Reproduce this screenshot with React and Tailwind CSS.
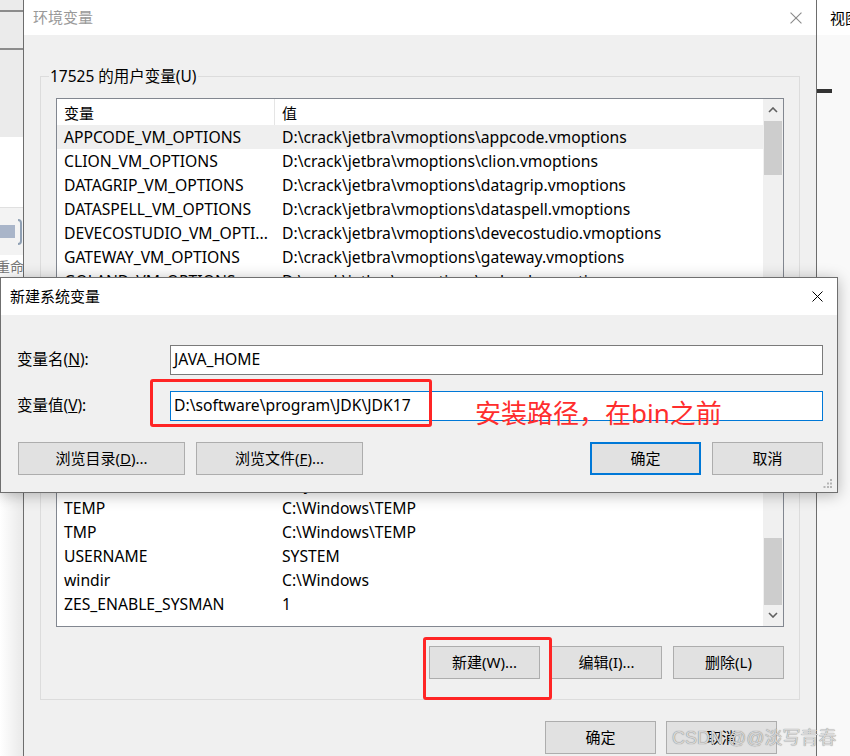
import React from "react";

const userVars = [
  ["APPCODE_VM_OPTIONS", "D:\\crack\\jetbra\\vmoptions\\appcode.vmoptions"],
  ["CLION_VM_OPTIONS", "D:\\crack\\jetbra\\vmoptions\\clion.vmoptions"],
  ["DATAGRIP_VM_OPTIONS", "D:\\crack\\jetbra\\vmoptions\\datagrip.vmoptions"],
  ["DATASPELL_VM_OPTIONS", "D:\\crack\\jetbra\\vmoptions\\dataspell.vmoptions"],
  ["DEVECOSTUDIO_VM_OPTI...", "D:\\crack\\jetbra\\vmoptions\\devecostudio.vmoptions"],
  ["GATEWAY_VM_OPTIONS", "D:\\crack\\jetbra\\vmoptions\\gateway.vmoptions"],
  ["GOLAND_VM_OPTIONS", "D:\\crack\\jetbra\\vmoptions\\goland.vmoptions"],
  ["IDEA_VM_OPTIONS", "D:\\crack\\jetbra\\vmoptions\\idea.vmoptions"],
];

const systemVars = [
  ["OS", "Windows_NT"],
  ["Path", "C:\\Windows\\system32;C:\\Windows;C:\\Windows\\System32\\Wbem"],
  ["PATHEXT", ".COM;.EXE;.BAT;.CMD;.VBS;.VBE;.JS;.JSE;.WSF;.WSH;.MSC"],
  ["PROCESSOR_ARCHITECTURE", "AMD64"],
  ["PSModulePath", "%SystemRoot%\\Modules\\C:\\WINDOWS\\Modules\\.."],
  ["TEMP", "C:\\Windows\\TEMP"],
  ["TMP", "C:\\Windows\\TEMP"],
  ["USERNAME", "SYSTEM"],
  ["windir", "C:\\Windows"],
  ["ZES_ENABLE_SYSMAN", "1"],
];

function Chevron({ up }) {
  return (
    <svg width="10" height="6" viewBox="0 0 10 6">
      <polyline
        points={up ? "1,5 5,1 9,5" : "1,1 5,5 9,1"}
        fill="none"
        stroke="#606060"
        strokeWidth="1.6"
      />
    </svg>
  );
}

function CloseX({ color = "#000", size = 11 }) {
  return (
    <svg width={size} height={size} viewBox="0 0 11 11">
      <path d="M0.5 0.5 L10.5 10.5 M10.5 0.5 L0.5 10.5" stroke={color} strokeWidth="1" />
    </svg>
  );
}

function WinButton({ children, primary, className = "" }) {
  return (
    <div
      className={`h-[33px] flex items-center justify-center bg-[#e1e1e1] text-[15px] text-black ${
        primary ? "border-2 border-[#0078d7]" : "border border-[#adadad]"
      } ${className}`}
    >
      {children}
    </div>
  );
}

function Row({ name, value, selected }) {
  return (
    <div className={`flex h-[24px] leading-[24px] text-[15.7px] text-black whitespace-nowrap ${selected ? "bg-[#efefef]" : ""}`}>
      <div className="w-[218px] pl-[7px] shrink-0">{name}</div>
      <div className="pl-[7px]">{value}</div>
    </div>
  );
}

function Scrollbar({ thumbTop, thumbHeight }) {
  return (
    <div className="w-[20px] shrink-0 bg-[#f0f0f0] flex flex-col items-center justify-between py-[8px] relative">
      <Chevron up />
      <div
        className="absolute left-[1px] right-[1px] bg-[#cdcdcd]"
        style={{ top: thumbTop, height: thumbHeight }}
      />
      <Chevron />
    </div>
  );
}

function VarList({ rows, height, bottomAligned, thumbTop, thumbHeight, selectFirst }) {
  return (
    <div className="flex border border-[#828790] bg-white" style={{ height }}>
      <div className="flex-1 flex flex-col overflow-hidden">
        <div className="flex h-[26px] shrink-0 text-[15px] text-black leading-[28px]">
          <div className="w-[218px] pl-[7px] border-r border-[#e5e5e5]">变量</div>
          <div className="pl-[7px]">值</div>
        </div>
        <div className={`flex-1 flex flex-col overflow-hidden ${bottomAligned ? "justify-end pb-[10px]" : ""}`}>
          {rows.map((r, i) => (
            <Row key={r[0]} name={r[0]} value={r[1]} selected={selectFirst && i === 0} />
          ))}
        </div>
      </div>
      <Scrollbar thumbTop={thumbTop} thumbHeight={thumbHeight} />
    </div>
  );
}

function GroupBox({ label, className = "", children }) {
  return (
    <fieldset className={`border border-[#dcdcdc] ${className}`}>
      <legend className="ml-[8px] px-[1px] text-[15.5px] leading-[20px] text-black">{label}</legend>
      <div className="px-[15px] pt-[12px] pb-[20px]">{children}</div>
    </fieldset>
  );
}

export default function App() {
  return (
    <div className="relative w-[850px] h-[756px] overflow-hidden bg-white font-['Noto_Sans','Noto_Sans_CJK_SC',sans-serif]">
      <div className="flex h-full">
        {/* background app on the left */}
        <div className="w-[23px] shrink-0 flex flex-col bg-white">
          <div className="h-[137px] bg-[#ebebeb] flex flex-col pt-[10px]">
            <div className="h-[2px] bg-[#8c8c8c]" />
            <div className="h-[2px] bg-[#8c8c8c] mt-[36px]" />
          </div>
          <div className="h-[70px]" />
          <div className="h-[48px] bg-[#f3f3f3] border-t border-[#e0e0e0] flex items-center">
            <div className="w-[15px] h-[13px] bg-[#a9b5c9]" />
            <div className="ml-[3px] w-[4px] h-[26px] border-r-2 border-y-2 border-[#8fa0b4] rounded-r-[4px]" />
          </div>
          <div className="text-[14px] text-[#777] whitespace-nowrap leading-[20px] mt-[2px] -ml-[4px]">重命名</div>
          <div className="flex-1 bg-gradient-to-r from-white to-[#e9e9e9]" />
        </div>

        {/* environment variables window */}
        <div className="w-[794px] shrink-0 flex flex-col border-x border-[#6d6d6d] bg-[#f0f0f0]">
          <div className="h-[35px] bg-white flex items-center justify-between pl-[9px] pr-[14px]">
            <span className="text-[15px] text-[#999]">环境变量</span>
            <CloseX color="#8a8a8a" size={12} />
          </div>
          <div className="flex flex-col px-[16px] pt-[31px]">
            <GroupBox label="17525 的用户变量(U)">
              <VarList rows={userVars} height={202} thumbTop={22} thumbHeight={54} selectFirst />
              <div className="flex justify-end gap-[11px] mt-[19px]">
                <WinButton className="w-[111px]">新建(N)...</WinButton>
                <WinButton className="w-[111px]">编辑(E)...</WinButton>
                <WinButton className="w-[111px]">删除(D)</WinButton>
              </div>
            </GroupBox>
            <GroupBox label="系统变量(S)" className="mt-[15px]">
              <VarList rows={systemVars} height={207} bottomAligned thumbTop={117} thumbHeight={67} />
              <div className="flex justify-end gap-[11px] mt-[19px]">
                <WinButton className="w-[111px]">新建(W)...</WinButton>
                <WinButton className="w-[111px]">编辑(I)...</WinButton>
                <WinButton className="w-[111px]">删除(L)</WinButton>
              </div>
            </GroupBox>
            <div className="flex justify-end gap-[10px] mt-[21px] pr-[23px]">
              <WinButton className="w-[111px]">确定</WinButton>
              <WinButton className="w-[111px]">取消</WinButton>
            </div>
          </div>
        </div>

        {/* background app on the right */}
        <div className="flex-1 flex flex-col bg-[#f9f9f9]">
          <div className="h-[35px] bg-white pl-[13px] pt-[8px] text-[15px] text-black whitespace-nowrap leading-[20px]">视图</div>
          <div className="h-[4px] w-[15px] bg-[#333] mt-[54px]" />
        </div>
      </div>

      {/* new system variable dialog */}
      <div className="absolute left-0 top-[277px] w-[838px] h-[216px] flex flex-col border border-[#6f6f6f] bg-[#f0f0f0] shadow-[0_2px_14px_rgba(0,0,0,0.28)]">
        <div className="h-[37px] shrink-0 bg-white flex items-center justify-between pl-[9px] pr-[14px]">
          <span className="text-[15px] text-black">新建系统变量</span>
          <CloseX />
        </div>
        <div className="flex flex-col pl-[16px] pr-[14px] pt-[30px]">
          <div className="flex items-center">
            <div className="w-[153px] text-[15.5px] text-black">
              变量名(<span className="underline">N</span>):
            </div>
            <div className="flex-1 h-[30px] border border-[#7a7a7a] bg-white pl-[3px] text-[15.7px] leading-[26px] text-black">
              JAVA_HOME
            </div>
          </div>
          <div className="flex items-center mt-[16px]">
            <div className="w-[153px] text-[15.5px] text-black">
              变量值(<span className="underline">V</span>):
            </div>
            <div className="flex-1 h-[30px] border border-[#0078d7] bg-white pl-[3px] text-[15.7px] leading-[27px] text-black">
              D:\software\program\JDK\JDK17
            </div>
          </div>
          <div className="flex items-center mt-[21px] pl-[1px]">
            <WinButton className="w-[167px]">
              浏览目录(<span className="underline">D</span>)...
            </WinButton>
            <WinButton className="w-[167px] ml-[11px]">
              浏览文件(<span className="underline">F</span>)...
            </WinButton>
            <WinButton primary className="w-[111px] ml-auto">确定</WinButton>
            <WinButton className="w-[111px] ml-[11px]">取消</WinButton>
          </div>
        </div>
        <svg className="absolute right-[4px] bottom-[3px]" width="10" height="10" viewBox="0 0 10 10">
          <g fill="#b5b5b5">
            <rect x="7" y="0" width="2" height="2" />
            <rect x="4" y="3.5" width="2" height="2" />
            <rect x="7" y="3.5" width="2" height="2" />
            <rect x="0.5" y="7" width="2" height="2" />
            <rect x="4" y="7" width="2" height="2" />
            <rect x="7" y="7" width="2" height="2" />
          </g>
        </svg>
      </div>

      {/* annotations */}
      <div className="absolute left-[150px] top-[379px] w-[282px] h-[48px] border-[3px] border-[#ff2525] rounded-[3px]" />
      <div className="absolute left-[475px] top-[397px] text-[26px] leading-[32px] text-[#ff2d2d] whitespace-nowrap">
        安装路径，在bin之前
      </div>
      <div className="absolute left-[423px] top-[637px] w-[129px] h-[63px] border-[3px] border-[#ff2525] rounded-[3px]" />

      {/* watermark */}
      <div className="absolute left-[672px] top-[726px] text-[18px] leading-[24px] text-[#d6d6d6] whitespace-nowrap font-['Liberation_Sans','Noto_Sans_CJK_SC',sans-serif] [text-shadow:0_0_1px_#6a6a6a]">
        CSDN @@淡写青春
      </div>
    </div>
  );
}
